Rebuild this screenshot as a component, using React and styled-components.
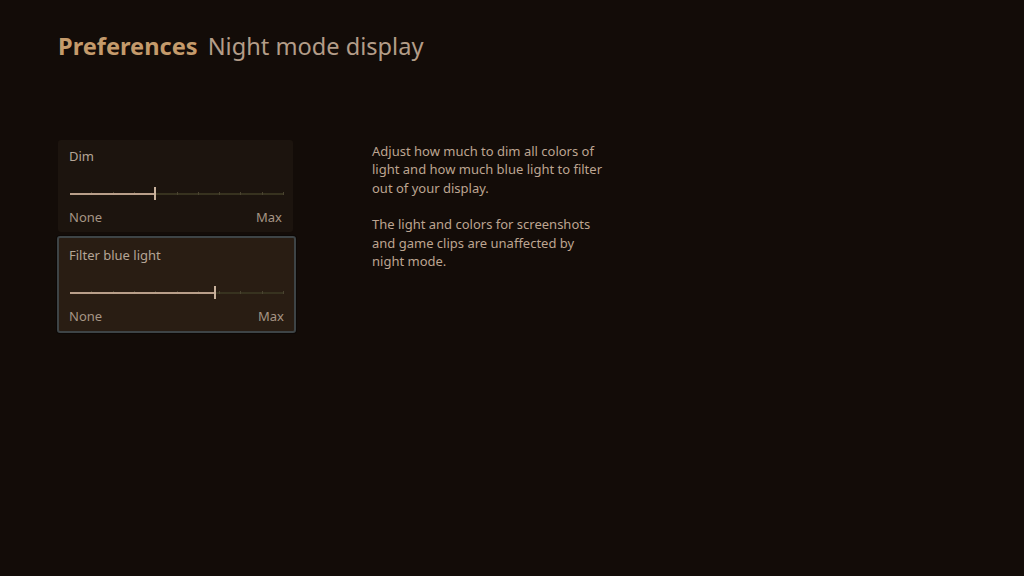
import styled, { createGlobalStyle } from "styled-components";

const GlobalStyle = createGlobalStyle`
  html, body {
    margin: 0;
    background: #130c08;
  }
  body {
    font-family: "Noto Sans", "Open Sans", sans-serif;
  }
`;

const Page = styled.div`
  width: 1024px;
  height: 576px;
  box-sizing: border-box;
  padding: 30px 58px 0;
  background: #130c08;
`;

const Title = styled.h1`
  margin: 0;
  font-size: 23.6px;
  font-weight: 400;
  line-height: 32px;
  color: #b39d88;
  white-space: nowrap;
`;

const Section = styled.span`
  font-weight: 700;
  color: #c49a6b;
  margin-right: 10px;
`;

const Body = styled.div`
  display: flex;
  align-items: flex-start;
  margin-top: 78px;
`;

const Column = styled.div`
  display: flex;
  flex-direction: column;
  gap: 4px;
  width: 239px;
`;

const Card = styled.div`
  box-sizing: border-box;
  height: ${(p) => (p.$focused ? 97 : 92)}px;
  margin-left: ${(p) => (p.$focused ? -1 : 0)}px;
  width: ${(p) => (p.$focused ? 239 : 235)}px;
  padding: ${(p) => (p.$focused ? "8px 10px 0 10px" : "7px 11px 0 11px")};
  background: ${(p) => (p.$focused ? "#291d13" : "#1c140e")};
  border: ${(p) => (p.$focused ? "2px solid #3e4446" : "none")};
  border-radius: 3px;
  box-shadow: ${(p) => (p.$focused ? "0 0 0 1px #0c0806" : "none")};
`;

const Label = styled.div`
  font-size: 13px;
  line-height: 18px;
  color: #b5a596;
`;

const Track = styled.div`
  position: relative;
  height: 2px;
  margin: 28px 0 0 1px;
  width: 213px;
  background: #37321f;
`;

const Fill = styled.div`
  position: absolute;
  left: 0;
  top: 0;
  height: 2px;
  background: #b99f8a;
`;

const Tick = styled.div`
  position: absolute;
  top: -1px;
  width: 1px;
  height: 3px;
  background: #4a4330;
`;

const Thumb = styled.div`
  position: absolute;
  top: -6px;
  width: 2px;
  height: 13px;
  margin-left: -1px;
  background: #c9b29c;
`;

const Ends = styled.div`
  display: flex;
  justify-content: space-between;
  margin-top: 13px;
  font-size: 13px;
  line-height: 18px;
  color: #a69585;
`;

const Notes = styled.div`
  margin-left: 75px;
  margin-top: 2px;
  width: 236px;
  font-size: 13px;
  line-height: 18.4px;
  color: #bda591;
`;

const Para = styled.p`
  margin: 0 0 18px;
`;

const Slider = ({ value }) => (
  <Track>
    {[10, 20, 30, 40, 50, 60, 70, 80, 90, 100].map((t) => (
      <Tick key={t} style={{ left: `${t}%` }} />
    ))}
    <Fill style={{ width: `${value}%` }} />
    <Thumb style={{ left: `${value}%` }} />
  </Track>
);

const Setting = ({ label, value, focused }) => (
  <Card $focused={focused}>
    <Label>{label}</Label>
    <Slider value={value} />
    <Ends>
      <span>None</span>
      <span>Max</span>
    </Ends>
  </Card>
);

export default function App() {
  return (
    <Page>
      <GlobalStyle />
      <Title>
        <Section>Preferences</Section>Night mode display
      </Title>
      <Body>
        <Column>
          <Setting label="Dim" value={40} />
          <Setting label="Filter blue light" value={68} focused />
        </Column>
        <Notes>
          <Para>
            Adjust how much to dim all colors of light and how much blue light to filter
            out of your display.
          </Para>
          <Para>
            The light and colors for screenshots and game clips are unaffected by night
            mode.
          </Para>
        </Notes>
      </Body>
    </Page>
  );
}
